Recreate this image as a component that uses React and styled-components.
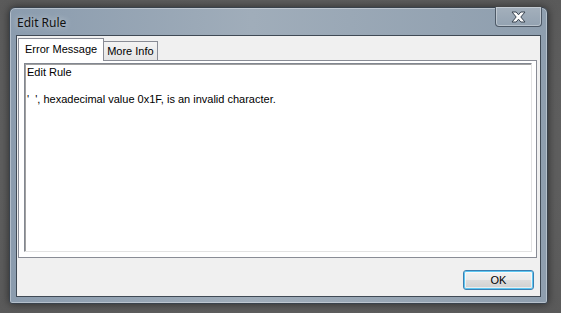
import React from 'react';
import styled, { createGlobalStyle } from 'styled-components';

const GlobalStyle = createGlobalStyle`
  html, body {
    margin: 0;
    padding: 0;
    background: #5d5d5d;
  }
  body {
    width: 561px;
    height: 313px;
    overflow: hidden;
    font-family: "Liberation Sans", Arial, sans-serif;
  }
`;

const Desktop = styled.div`
  width: 561px;
  height: 313px;
  box-sizing: border-box;
  padding: 7px 0 0 9px;
  background: radial-gradient(ellipse at 50% 50%, #666 0%, #5e5e5e 70%, #5a5a5a 100%);
`;

const Window = styled.div`
  width: 539px;
  height: 297px;
  box-sizing: border-box;
  display: flex;
  flex-direction: column;
  padding: 0 6px 6px 6px;
  border: 1px solid #39424c;
  border-radius: 6px 6px 3px 3px;
  background: linear-gradient(to right, #8b9cae 0%, #a0adba 45%, #8e9eae 100%);
  box-shadow: 0 0 8px rgba(0, 0, 0, 0.55), inset 0 0 0 1px rgba(255, 255, 255, 0.35);
`;

const TitleBar = styled.div`
  height: 27px;
  display: flex;
  align-items: flex-start;
  justify-content: space-between;
`;

const Title = styled.div`
  font-family: "Noto Sans", "Open Sans", sans-serif;
  font-size: 12px;
  color: #111;
  padding: 6px 0 0 1px;
  text-shadow: 0 0 6px rgba(255, 255, 255, 0.7);
`;

const CloseButton = styled.div`
  width: 47px;
  height: 20px;
  box-sizing: border-box;
  margin: -1px -1px 0 0;
  border: 1px solid #4d5966;
  border-top: none;
  border-radius: 0 0 4px 4px;
  background: linear-gradient(#a4b0bc, #93a2b1);
  box-shadow: inset 0 0 0 1px rgba(255, 255, 255, 0.35);
  display: flex;
  align-items: center;
  justify-content: center;
`;

const Client = styled.div`
  flex: 1;
  display: flex;
  flex-direction: column;
  background: #f0f0f0;
  border: 1px solid #404a55;
  padding: 1px 3px 0 1px;
`;

const TabStrip = styled.div`
  display: flex;
  align-items: flex-end;
  height: 23px;
  position: relative;
  z-index: 1;
`;

const Tab = styled.div`
  box-sizing: border-box;
  font-size: 11px;
  color: #000;
  border: 1px solid #898c95;
  border-bottom: none;
  background: ${p => (p.$active ? '#fff' : 'linear-gradient(#f3f3f3, #e5e5e5)')};
  height: ${p => (p.$active ? '23px' : '19px')};
  padding: ${p => (p.$active ? '4px 6px 0 6px' : '3px 3px 0 3px')};
  margin-left: ${p => (p.$active ? '0' : '-1px')};
  margin-bottom: ${p => (p.$active ? '-1px' : '0')};
`;

const Panel = styled.div`
  height: 198px;
  box-sizing: border-box;
  border: 1px solid #898c95;
  background: #fff;
  padding: 2px 4px 5px 5px;
  display: flex;
`;

const TextBox = styled.div`
  flex: 1;
  border: 1px solid #828790;
  border-right-color: #e3e3e3;
  border-bottom-color: #e3e3e3;
  box-shadow: inset 1px 1px 0 #a0a0a0;
  padding: 2px 2px;
  font-size: 11px;
  line-height: 13px;
  color: #000;
`;

const Line = styled.div`
  margin-bottom: 14px;
  white-space: pre;
`;

const Footer = styled.div`
  flex: 1;
  display: flex;
  justify-content: flex-end;
  align-items: flex-start;
  padding: 12px 3px 0 0;
`;

const OkButton = styled.button`
  width: 71px;
  height: 20px;
  box-sizing: border-box;
  border: 1px solid #3c7fb1;
  border-radius: 3px;
  font-family: "Liberation Sans", Arial, sans-serif;
  font-size: 11px;
  color: #000;
  background: linear-gradient(#f2f2f2 0%, #ebebeb 49%, #dddddd 50%, #cfcfcf 100%);
  box-shadow: inset 0 0 0 1px #5ec7f2, inset 0 0 0 2px rgba(255, 255, 255, 0.6);
  padding: 0;
`;

const CloseIcon = () => (
  <svg width="15" height="12" viewBox="0 0 15 12">
    <path
      d="M1 1 H5.2 L7.5 3.8 L9.8 1 H14 L9.8 6 L14 11 H9.8 L7.5 8.2 L5.2 11 H1 L5.2 6 Z"
      fill="#fff"
      stroke="#3a4450"
      strokeWidth="1"
      strokeLinejoin="round"
    />
  </svg>
);

export default function App() {
  return (
    <>
      <GlobalStyle />
      <Desktop>
        <Window>
          <TitleBar>
            <Title>Edit Rule</Title>
            <CloseButton>
              <CloseIcon />
            </CloseButton>
          </TitleBar>
          <Client>
            <TabStrip>
              <Tab $active>Error Message</Tab>
              <Tab>More Info</Tab>
            </TabStrip>
            <Panel>
              <TextBox>
                <Line>Edit Rule</Line>
                <Line>{"'\u00a0\u00a0', hexadecimal value 0x1F, is an invalid character."}</Line>
              </TextBox>
            </Panel>
            <Footer>
              <OkButton>OK</OkButton>
            </Footer>
          </Client>
        </Window>
      </Desktop>
    </>
  );
}
